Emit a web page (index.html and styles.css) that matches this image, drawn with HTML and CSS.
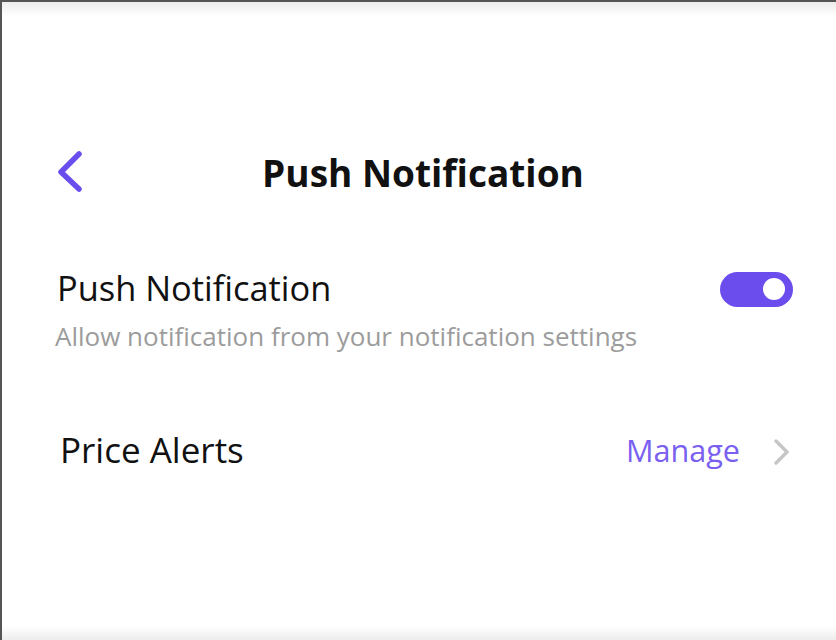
FILE: index.html
```html
<!DOCTYPE html>
<html lang="en">
<head>
  <meta charset="UTF-8">
  <title>Push Notification</title>
  <meta name="viewport" content="width=device-width,initial-scale=1">
  <link rel="stylesheet" href="styles.css">
</head>
<body>
<div class="screen">
  <header class="topbar">
    <button class="back" aria-label="Back">
      <svg width="30" height="44" viewBox="0 0 30 44">
        <path d="M22 3 L4 21 L22 38" fill="none" stroke="currentColor" stroke-width="5.5" stroke-linecap="round" stroke-linejoin="round"/>
      </svg>
    </button>
    <h1>Push Notification</h1>
    <span></span>
  </header>

  <section class="setting">
    <div class="row">
      <div class="label">Push Notification</div>
      <label class="switch">
        <input type="checkbox" checked>
        <span class="knob"></span>
      </label>
    </div>
    <div class="hint">Allow notification from your notification settings</div>
  </section>

  <section class="setting alerts">
    <div class="row">
      <div class="label">Price Alerts</div>
      <a class="manage" href="#">
        Manage
        <svg width="20" height="30" viewBox="0 0 20 30">
          <path d="M4 6 L15 17 L4 28" fill="none" stroke="currentColor" stroke-width="3.5" stroke-linecap="round" stroke-linejoin="round"/>
        </svg>
      </a>
    </div>
  </section>
</div>
</body>
</html>
```

FILE: styles.css
```css
:root {
  --accent: #6b4cec;
  --accent-soft: #7a5ff0;
  --fg: #111;
  --muted: #9c9c9c;
  --chev: #c6c6c6;
  --frame: #555;
  --sans: "Open Sans", Lato, Arial, sans-serif;
}
html, body {
  margin: 0;
  padding: 0;
  height: 100%;
  background: #fff;
  font-family: var(--sans);
  color: var(--fg);
}
.screen {
  box-sizing: border-box;
  height: 100%;
  border-top: 2px solid var(--frame);
  border-left: 2px solid var(--frame);
  padding: 0 43px 0 55px;
  background:
    linear-gradient(#ececec, #fff 14px) top / 100% 14px no-repeat,
    linear-gradient(#fff, #ededed) bottom / 100% 14px no-repeat,
    #fff;
}
.topbar {
  display: grid;
  grid-template-columns: 1fr auto 1fr;
  align-items: center;
  padding-top: 145px;
  height: 48px;
}
.back {
  justify-self: start;
  background: none;
  border: 0;
  padding: 0;
  color: var(--accent);
  display: flex;
  cursor: pointer;
}
h1 {
  margin: 0;
  font-size: 37px;
  font-weight: 700;
  margin-left: -4px;
}
.setting {
  margin-top: 73px;
}
.row {
  display: flex;
  align-items: center;
  justify-content: space-between;
}
.label {
  font-size: 34.4px;
  line-height: 40px;
}
.hint {
  margin: 10px 0 0 -2px;
  font-size: 26px;
  color: var(--muted);
}
.switch {
  position: relative;
  width: 73px;
  height: 35px;
  flex: none;
  margin-top: 3px;
}
.switch input {
  display: none;
}
.knob {
  position: absolute;
  inset: 0;
  border-radius: 18px;
  background: var(--accent);
}
.knob::after {
  content: "";
  position: absolute;
  top: 6px;
  right: 8px;
  width: 22px;
  height: 22px;
  border-radius: 50%;
  background: #fff;
}
.alerts {
  margin-top: 75px;
}
.alerts .label {
  margin-left: 3px;
  font-size: 35px;
}
.manage {
  display: flex;
  align-items: center;
  gap: 32px;
  font-size: 30.6px;
  color: var(--accent-soft);
  text-decoration: none;
}
.manage svg {
  color: var(--chev);
  margin-right: 1px;
}
```
